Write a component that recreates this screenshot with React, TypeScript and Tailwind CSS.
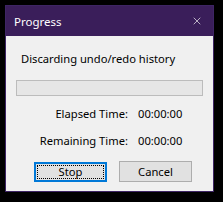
import { X } from 'lucide-react';

export default function App() {
  return (
    <div className="w-[223px] h-[202px] bg-black pt-[5px] pl-[5px] font-['Noto_Sans',sans-serif] text-[11.2px]">
      <div className="w-[209px] h-[187px] border border-[#3e2564] flex flex-col">
        {/* Title bar */}
        <div className="h-[30px] bg-[#3a1e5a] flex items-center justify-between pl-[8px] pr-[10px] pt-[2px] text-white">
          <span className="text-[11.5px] leading-none">Progress</span>
          <X size={12} strokeWidth={1.3} className="-mt-[2px]" />
        </div>

        {/* Body */}
        <div className="flex-1 bg-[#f0f0f0] flex flex-col text-black">
          <div className="pl-[15px] pt-[15px] leading-[15px]">Discarding undo/redo history</div>
          <div className="ml-[10px] mt-[14px] w-[187px] h-[16px] border border-[#bcbcbc] bg-[#e6e6e6]" />
          <div className="mt-[10px] grid grid-cols-[122px_1fr] gap-x-[10px] gap-y-[11px] leading-[16px]">
            <span className="text-right">Elapsed Time:</span>
            <span>00:00:00</span>
            <span className="text-right">Remaining Time:</span>
            <span>00:00:00</span>
          </div>
          <div className="mt-[13px] flex gap-[12px] pl-[28px]">
            <button className="w-[73px] h-[20px] border-2 border-[#0078d7] bg-[#e1e1e1] p-[1px] leading-none">
              <span className="flex items-center justify-center w-full h-full border border-dotted border-black">Stop</span>
            </button>
            <button className="w-[73px] h-[21px] -mt-[1px] border border-[#adadad] bg-[#e1e1e1] leading-none">Cancel</button>
          </div>
        </div>
      </div>
    </div>
  );
}
